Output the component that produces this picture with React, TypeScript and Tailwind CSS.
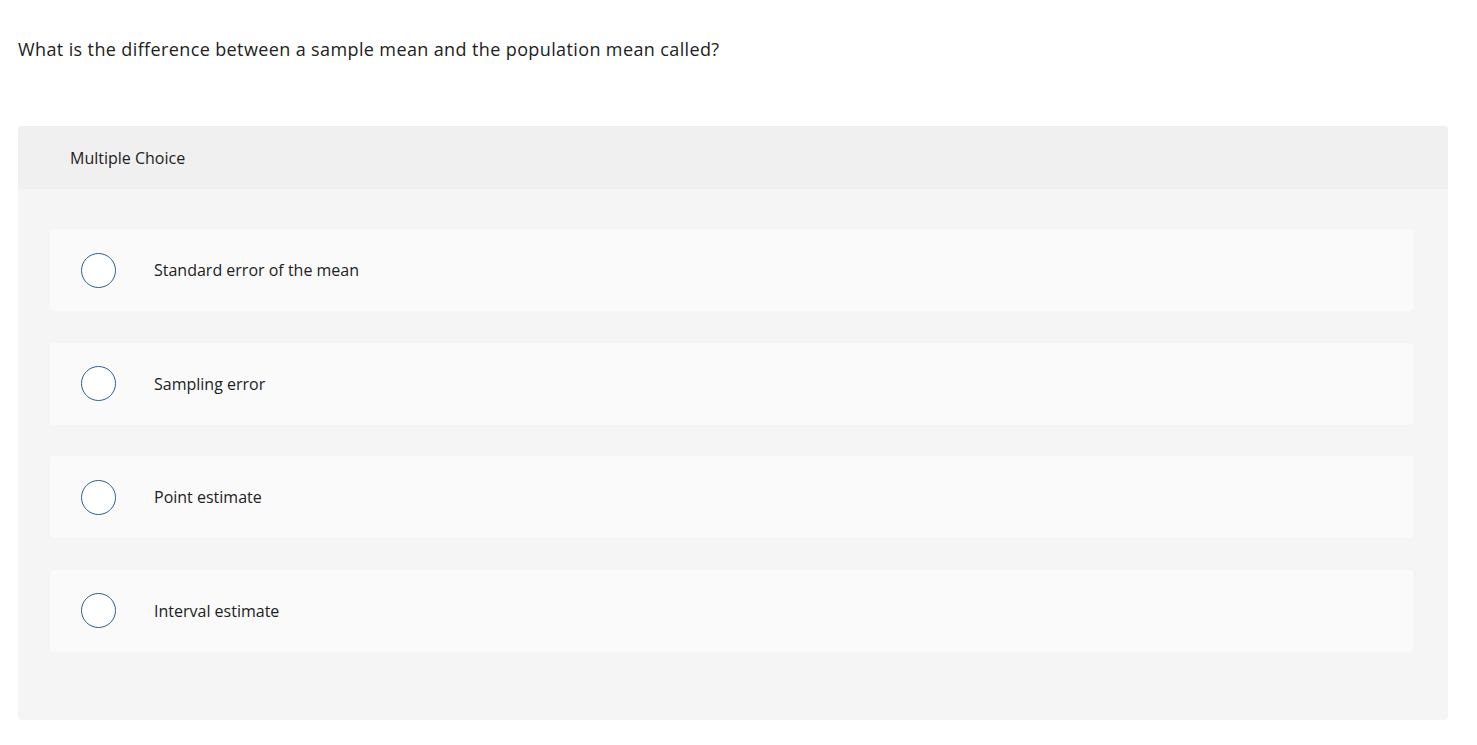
const options = [
  "Standard error of the mean",
  "Sampling error",
  "Point estimate",
  "Interval estimate",
];

export default function App() {
  return (
    <div className="min-h-[745px] bg-white font-['Open_Sans','Lato',sans-serif] text-[#222]">
      <div className="px-[18px] pt-[36px]">
        <p className="text-[18px] leading-[26px] tracking-[0.38px]">
          What is the difference between a sample mean and the population mean called?
        </p>
      </div>

      <div className="mx-[18px] mt-[64px] w-[1430px] overflow-hidden rounded-[4px] bg-[#f5f5f5]">
        <div className="flex h-[63px] items-center bg-[#f0f0f0] px-[52px] text-[16px]">
          Multiple Choice
        </div>
        <div className="flex flex-col gap-[31.5px] pt-[40px] pb-[68px] pl-[32px] pr-[35px]">
          {options.map((opt) => (
            <label
              key={opt}
              className="flex h-[82px] items-center rounded-[4px] bg-[#fafafa] pl-[31px]"
            >
              <span className="h-[35px] w-[35px] shrink-0 rounded-full border-[1.5px] border-[#2d5f91] bg-white" />
              <span className="ml-[38px] text-[16px]">{opt}</span>
            </label>
          ))}
        </div>
      </div>
    </div>
  );
}
